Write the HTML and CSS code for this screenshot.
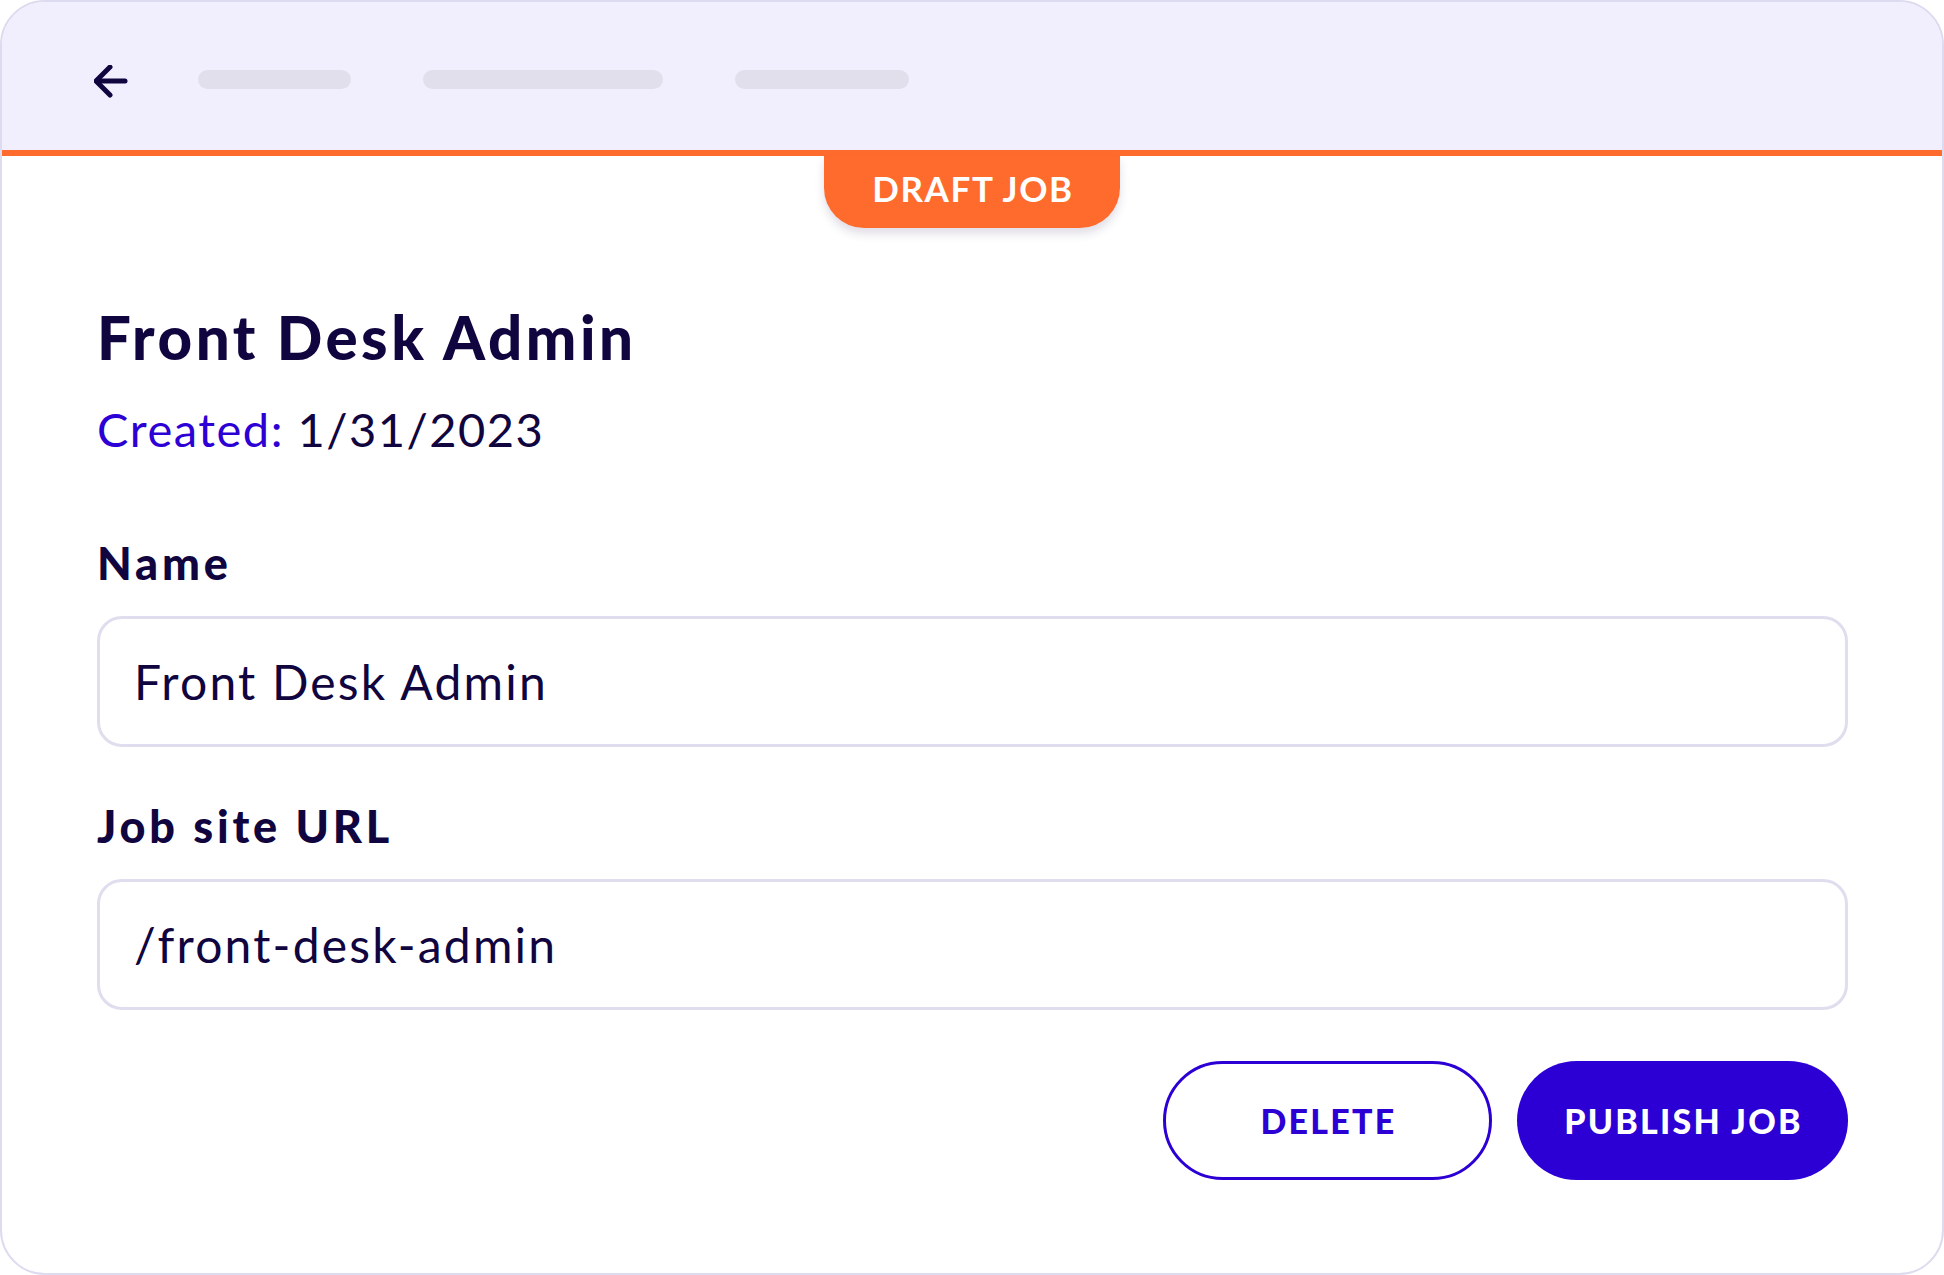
FILE: index.html
```html
<!DOCTYPE html>
<html lang="en">
<head>
  <meta charset="UTF-8">
  <meta name="viewport" content="width=device-width, initial-scale=1.0">
  <title>Draft Job</title>
  <link rel="stylesheet" href="styles.css">
</head>
<body>
<div class="frame">
  <!-- Top bar -->
  <header class="topbar">
    <button class="back-btn" aria-label="Back">
      <svg width="34" height="34" viewBox="0 0 34 34" fill="none" stroke="#10053f" stroke-width="5" stroke-linecap="round" stroke-linejoin="round">
        <path d="M31 16H3"/>
        <path d="M16 2L2 16l14 14"/>
      </svg>
    </button>
    <span class="skeleton skeleton-sm"></span>
    <span class="skeleton skeleton-lg"></span>
    <span class="skeleton skeleton-md"></span>
  </header>

  <!-- Status -->
  <div class="status-row">
    <span class="status-badge">DRAFT JOB</span>
  </div>

  <!-- Job form -->
  <main class="job-form">
    <h1 class="job-title">Front Desk Admin</h1>
    <p class="job-meta"><span class="meta-key">Created:</span> 1/31/2023</p>

    <label class="field-label" for="jobName">Name</label>
    <input class="field-input" id="jobName" type="text" value="Front Desk Admin">

    <label class="field-label field-label-second" for="jobUrl">Job site URL</label>
    <input class="field-input" id="jobUrl" type="text" value="/front-desk-admin">

    <div class="actions">
      <button class="btn btn-outline">DELETE</button>
      <button class="btn btn-solid">PUBLISH JOB</button>
    </div>
  </main>
</div>
</body>
</html>
```

FILE: styles.css
```css
* {
  margin: 0;
  padding: 0;
  box-sizing: border-box;
}

:root {
  --navy: #10053f;
  --violet: #2c00d5;
  --orange: #ff6b2d;
  --header-bg: #f1effe;
  --line: #e0deee;
  --skeleton: #e1dfec;
}

body {
  font-family: 'Lato', 'Noto Sans', sans-serif;
  color: var(--navy);
  background: #fff;
  width: 1944px;
  height: 1275px;
  overflow: hidden;
}

.frame {
  width: 1944px;
  height: 1275px;
  border: 2px solid #dddbef;
  border-radius: 45px;
  overflow: hidden;
  background: #fff;
  display: flex;
  flex-direction: column;
}

/* Top bar */
.topbar {
  height: 154px;
  flex-shrink: 0;
  background: var(--header-bg);
  border-bottom: 6px solid var(--orange);
  display: flex;
  align-items: center;
  padding: 6px 0 0 92px;
}

.back-btn {
  background: none;
  border: none;
  width: 34px;
  height: 34px;
  display: flex;
  margin-right: 70px;
  margin-top: 6px;
  cursor: pointer;
}

.skeleton {
  height: 19px;
  border-radius: 10px;
  background: var(--skeleton);
  margin-right: 72px;
}

.skeleton-sm { width: 153px; }
.skeleton-lg { width: 240px; }
.skeleton-md { width: 174px; }

/* Status badge */
.status-row {
  display: flex;
  justify-content: center;
}

.status-badge {
  width: 296px;
  height: 72px;
  padding: 0 0 8px 2px;
  background: var(--orange);
  color: #fff;
  font-weight: 700;
  font-size: 35px;
  letter-spacing: 1.6px;
  display: flex;
  align-items: center;
  justify-content: center;
  border-radius: 0 0 40px 40px;
  box-shadow: 0 6px 10px rgba(40, 20, 80, 0.14);
}

/* Form */
.job-form {
  padding: 0 94px 0 95px;
  display: flex;
  flex-direction: column;
}

.job-title {
  font-size: 60px;
  font-weight: 900;
  line-height: 72px;
  letter-spacing: 3.5px;
  margin-top: 73px;
}

.job-meta {
  font-size: 47px;
  line-height: 56px;
  letter-spacing: 1.5px;
  margin-top: 28px;
}

.meta-key {
  color: var(--violet);
}

.field-label {
  font-size: 45px;
  font-weight: 900;
  line-height: 54px;
  letter-spacing: 3.8px;
  margin-top: 79px;
}

.field-label-second {
  margin-top: 52px;
}

.field-input {
  margin-top: 26px;
  height: 131px;
  width: 100%;
  border: 3px solid var(--line);
  border-radius: 25px;
  padding: 0 34px;
  font-family: inherit;
  font-size: 48px;
  letter-spacing: 2.2px;
  color: var(--navy);
  background: #fff;
  outline: none;
}

.actions {
  display: flex;
  justify-content: flex-end;
  gap: 25px;
  margin-top: 51px;
}

.btn {
  height: 119px;
  border-radius: 60px;
  padding-left: 2px;
  font-family: inherit;
  font-size: 34px;
  font-weight: 900;
  letter-spacing: 2.2px;
  cursor: pointer;
}

.btn-outline {
  width: 329px;
  background: #fff;
  color: var(--violet);
  border: 3px solid var(--violet);
}

.btn-solid {
  width: 331px;
  background: var(--violet);
  color: #fff;
  border: none;
}
```
